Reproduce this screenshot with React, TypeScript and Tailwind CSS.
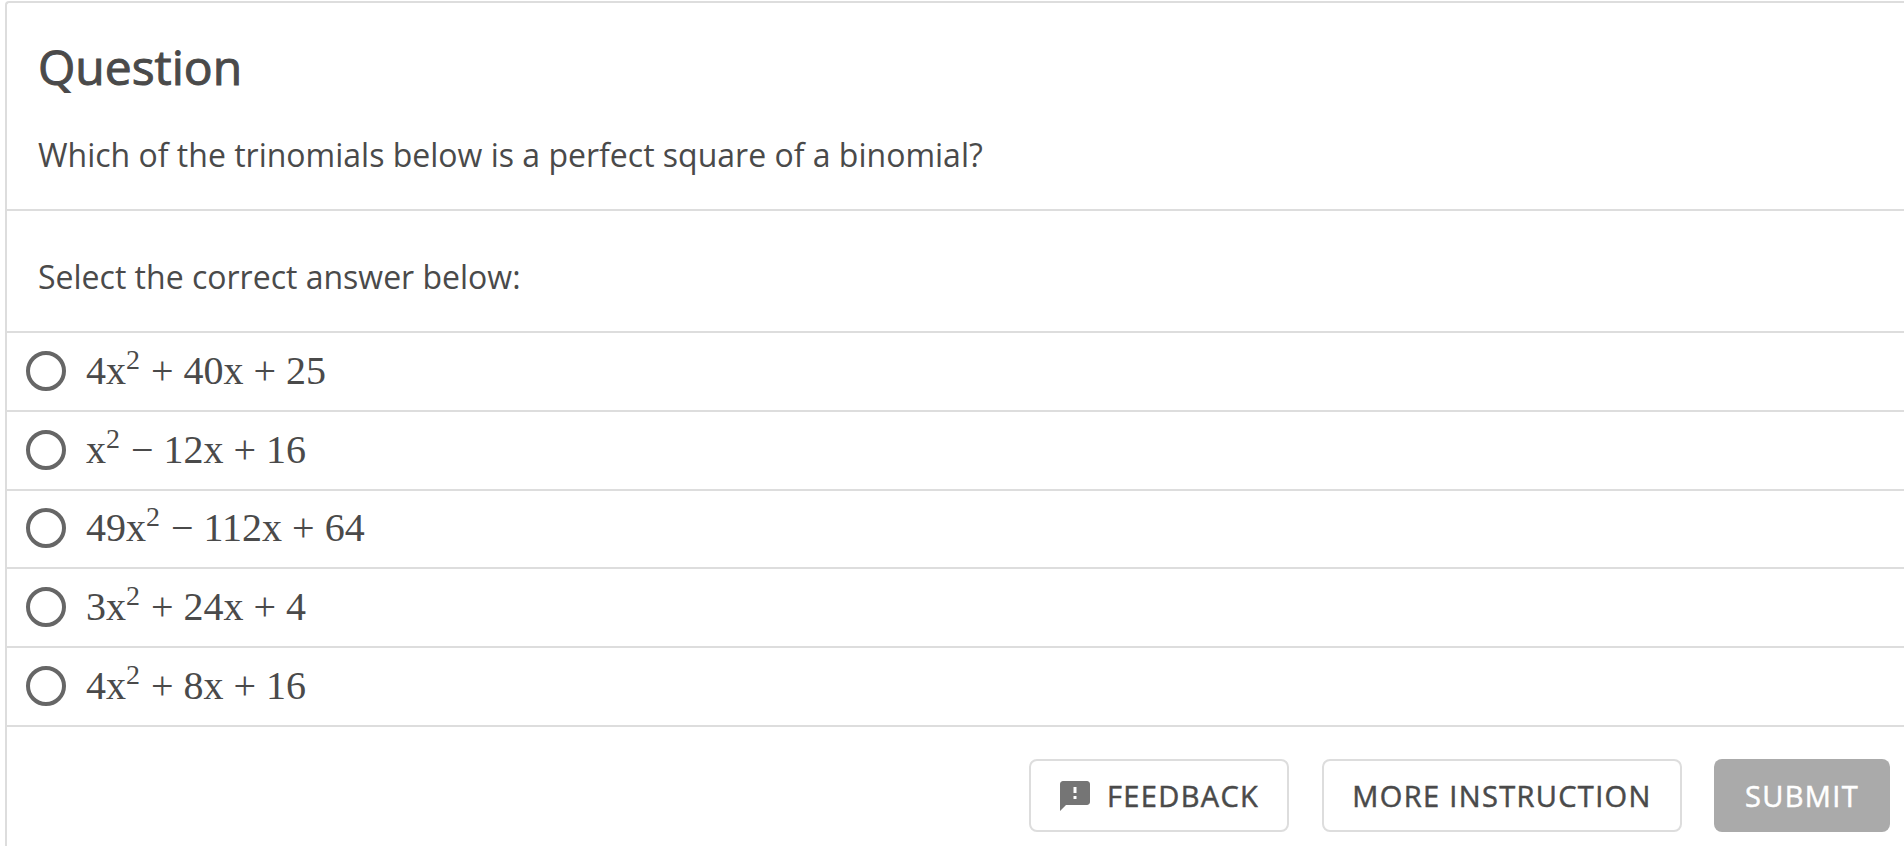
const answers: { id: string; lead: string; tail: string }[] = [
  { id: 'a', lead: '4x', tail: ' + 40x + 25' },
  { id: 'b', lead: 'x', tail: ' − 12x + 16' },
  { id: 'c', lead: '49x', tail: ' − 112x + 64' },
  { id: 'd', lead: '3x', tail: ' + 24x + 4' },
  { id: 'e', lead: '4x', tail: ' + 8x + 16' },
];

function FeedbackIcon() {
  return (
    <svg viewBox="0 0 24 24" className="mt-[2px] w-9 h-9 shrink-0 fill-[#757575]">
      <path d="M20 2H4c-1.1 0-1.99.9-1.99 2L2 22l4-4h14c1.1 0 2-.9 2-2V4c0-1.1-.9-2-2-2zm-7 12h-2v-2h2v2zm0-4h-2V6h2v4z" />
    </svg>
  );
}

export default function App() {
  return (
    <div className="h-[846px] overflow-hidden bg-white pt-px pl-[5px] text-[#4a4a4a] font-['Open_Sans',sans-serif]">
      <div className="h-[900px] border-t-2 border-l-2 border-[#dddddd] rounded-tl-sm">
        <div className="h-[208px] border-b-2 border-[#dddddd] pl-[31px] pt-[34px]">
          <h1 className="text-[48px] leading-[60px] font-normal [-webkit-text-stroke:1px]">Question</h1>
          <p className="mt-[36px] text-[32px] leading-[44px]">Which of the trinomials below is a perfect square of a binomial?</p>
        </div>
        <div className="h-[122px] border-b-2 border-[#dddddd] pl-[31px] pt-[44px]">
          <p className="text-[32px] leading-[44px]">Select the correct answer below:</p>
        </div>
        {answers.map((a) => (
          <label key={a.id} className="flex h-[78.8px] items-center gap-[20px] border-b-2 border-[#dddddd] pl-[19px]">
            <span className="mb-px h-10 w-10 shrink-0 rounded-full border-4 border-[#666666]" />
            <span className="-mt-px whitespace-pre font-['Liberation_Serif',serif] text-[40px] leading-[44px]">
              {a.lead}
              <sup className="-top-[15px] pr-px text-[28px] leading-none">2</sup>
              {a.tail}
            </span>
          </label>
        ))}
        <div className="flex justify-end pt-[32px] pr-[14px]">
          <button className="flex h-[73px] w-[260px] items-center gap-[14px] rounded-lg border-2 border-[#dddddd] pl-[26px] text-[29px] tracking-[1.35px] [-webkit-text-stroke:0.5px]">
            <FeedbackIcon />
            FEEDBACK
          </button>
          <button className="ml-[33px] flex h-[73px] w-[360px] items-center justify-center rounded-lg border-2 border-[#dddddd] text-[29px] tracking-[1.35px] [-webkit-text-stroke:0.5px]">
            MORE INSTRUCTION
          </button>
          <button className="ml-8 flex h-[73px] w-[176px] items-center justify-center rounded-lg bg-[#aaaaaa] text-[29px] tracking-[1.35px] text-white [-webkit-text-stroke:0.5px]">
            SUBMIT
          </button>
        </div>
      </div>
    </div>
  );
}
